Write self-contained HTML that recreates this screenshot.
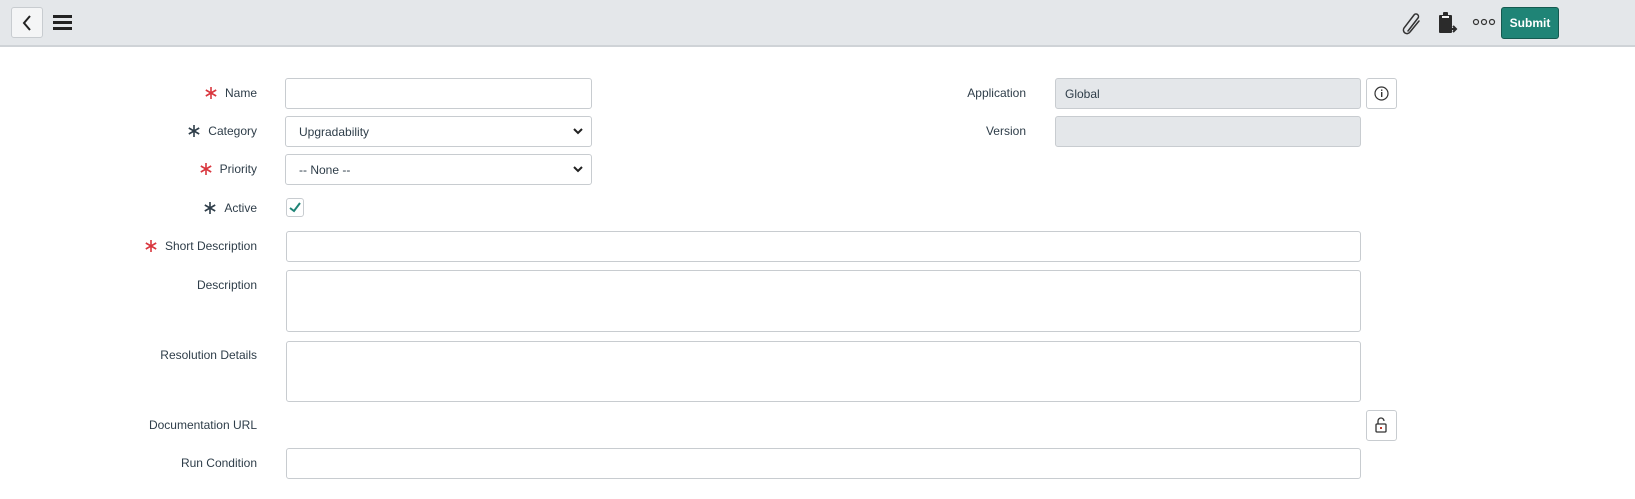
<!DOCTYPE html>
<html><head><style>
*{box-sizing:border-box;margin:0;padding:0}
body{width:1635px;height:499px;background:#fff;font-family:"Liberation Sans",sans-serif;color:#2e3d49;position:relative;overflow:hidden;font-size:11px}
.hdr{position:absolute;left:0;top:0;width:1635px;height:47px;background:#e4e7ea;border-bottom:2px solid #cfd3d7}
.a{position:absolute}
.lbl{position:absolute;right:1378px;font-size:12px;color:#2e3d49;white-space:nowrap;line-height:14px;display:flex;align-items:center}
.inp{position:absolute;border:1px solid #c8ccd0;border-radius:3px;background:#fff}
.ro{background:#e4e7ea}
.st{margin-right:8px}
.sel{font-size:12px;padding:8px 13px;color:#2e3d49}
.chev{position:absolute;right:7px;top:8px}
.btn{position:absolute;border:1px solid #c8ccd0;border-radius:3px;background:#fff}
</style></head><body>
<svg width="0" height="0" style="position:absolute"><defs>
<g id="ast"><path d="M6 0 V12 M0.8 3 L11.2 9 M0.8 9 L11.2 3" stroke-width="1.6"/></g></defs></svg>
<div class="hdr">
 <div class="btn" style="left:11px;top:7px;width:32px;height:31px;background:#f4f5f6"></div>
 <svg class="a" style="left:20px;top:14px" width="14" height="18"><path d="M10 2 L4 9 L10 16" stroke="#222" stroke-width="2" fill="none"/></svg>
 <svg class="a" style="left:53px;top:15px" width="20" height="16"><rect x="0" y="0" width="19" height="3" fill="#222"/><rect x="0" y="6" width="19" height="3" fill="#222"/><rect x="0" y="12" width="19" height="3" fill="#222"/></svg>
 <svg class="a" style="left:1401px;top:11px" width="22" height="24"><path d="M7 20 L17 7 a2.5 2.5 0 0 0 -4 -3 L3 17 a3.5 3.5 0 0 0 6 4 L18 10" stroke="#333" stroke-width="1.5" fill="none" stroke-linecap="round"/></svg>
 <svg class="a" style="left:1437px;top:10px" width="22" height="26"><rect x="2" y="5" width="13" height="18" rx="1" fill="#2b2b2b"/><rect x="6" y="2" width="5" height="5" rx="1" fill="#2b2b2b"/><rect x="5" y="6" width="7" height="2" fill="#f5f5f5"/><path d="M12 19 H19 M16 16 L19 19 L16 22" stroke="#2b2b2b" stroke-width="2" fill="none"/></svg>
 <svg class="a" style="left:1472px;top:18px" width="24" height="8"><circle cx="4" cy="4" r="2.5" stroke="#333" fill="none" stroke-width="1.2"/><circle cx="12" cy="4" r="2.5" stroke="#333" fill="none" stroke-width="1.2"/><circle cx="20" cy="4" r="2.5" stroke="#333" fill="none" stroke-width="1.2"/></svg>
 <div class="a" style="left:1501px;top:7px;width:58px;height:32px;background:#1f8476;border:1px solid #145a50;border-radius:3px;color:#fff;font-weight:bold;font-size:12px;text-align:center;line-height:30px">Submit</div>
</div>

<div class="lbl" style="top:86px"><svg class="st" width="12" height="12" stroke="#d9363e"><use href="#ast"/></svg>Name</div>
<div class="inp" style="left:285px;top:78px;width:307px;height:31px"></div>
<div class="lbl" style="top:124px"><svg class="st" width="12" height="12" stroke="#2e3d49"><use href="#ast"/></svg>Category</div>
<div class="inp sel" style="left:285px;top:116px;width:307px;height:31px">Upgradability<svg class="chev" width="12" height="12"><path d="M2 4 L6 8 L10 4" stroke="#222" stroke-width="2" fill="none"/></svg></div>
<div class="lbl" style="top:162px"><svg class="st" width="12" height="12" stroke="#d9363e"><use href="#ast"/></svg>Priority</div>
<div class="inp sel" style="left:285px;top:154px;width:307px;height:31px">-- None --<svg class="chev" width="12" height="12"><path d="M2 4 L6 8 L10 4" stroke="#222" stroke-width="2" fill="none"/></svg></div>
<div class="lbl" style="top:201px"><svg class="st" width="12" height="12" stroke="#2e3d49"><use href="#ast"/></svg>Active</div>
<div class="inp" style="left:286px;top:198px;width:18px;height:19px"><svg width="16" height="17"><path d="M3 9 L7 12 L13 4" stroke="#1f8476" stroke-width="2" fill="none"/></svg></div>
<div class="lbl" style="top:239px"><svg class="st" width="12" height="12" stroke="#d9363e"><use href="#ast"/></svg>Short Description</div>
<div class="inp" style="left:286px;top:231px;width:1075px;height:31px"></div>
<div class="lbl" style="top:278px">Description</div>
<div class="inp" style="left:286px;top:270px;width:1075px;height:62px"></div>
<div class="lbl" style="top:348px">Resolution Details</div>
<div class="inp" style="left:286px;top:341px;width:1075px;height:61px"></div>
<div class="lbl" style="top:418px">Documentation URL</div>
<div class="btn" style="left:1366px;top:410px;width:31px;height:31px"><svg width="29" height="29"><rect x="9" y="13" width="10" height="8" rx="1" stroke="#333" stroke-width="1.3" fill="none"/><path d="M11 13 V10 a3 3 0 0 1 6 0" stroke="#333" stroke-width="1.3" fill="none"/><rect x="13" y="16" width="2" height="2" fill="#c0392b"/></svg></div>
<div class="lbl" style="top:456px">Run Condition</div>
<div class="inp" style="left:286px;top:448px;width:1075px;height:31px"></div>

<div class="a" style="right:609px;top:86px;font-size:12px">Application</div>
<div class="inp ro" style="left:1055px;top:78px;width:306px;height:31px;font-size:12px;padding:8px 9px">Global</div>
<div class="btn" style="left:1366px;top:78px;width:31px;height:31px"><svg width="29" height="29"><circle cx="14.5" cy="14.5" r="6.5" stroke="#333" stroke-width="1.2" fill="none"/><rect x="14" y="13" width="1.4" height="5" fill="#333"/><rect x="14" y="10.5" width="1.4" height="1.4" fill="#333"/></svg></div>
<div class="a" style="right:609px;top:124px;font-size:12px">Version</div>
<div class="inp ro" style="left:1055px;top:116px;width:306px;height:31px"></div>
</body></html>
